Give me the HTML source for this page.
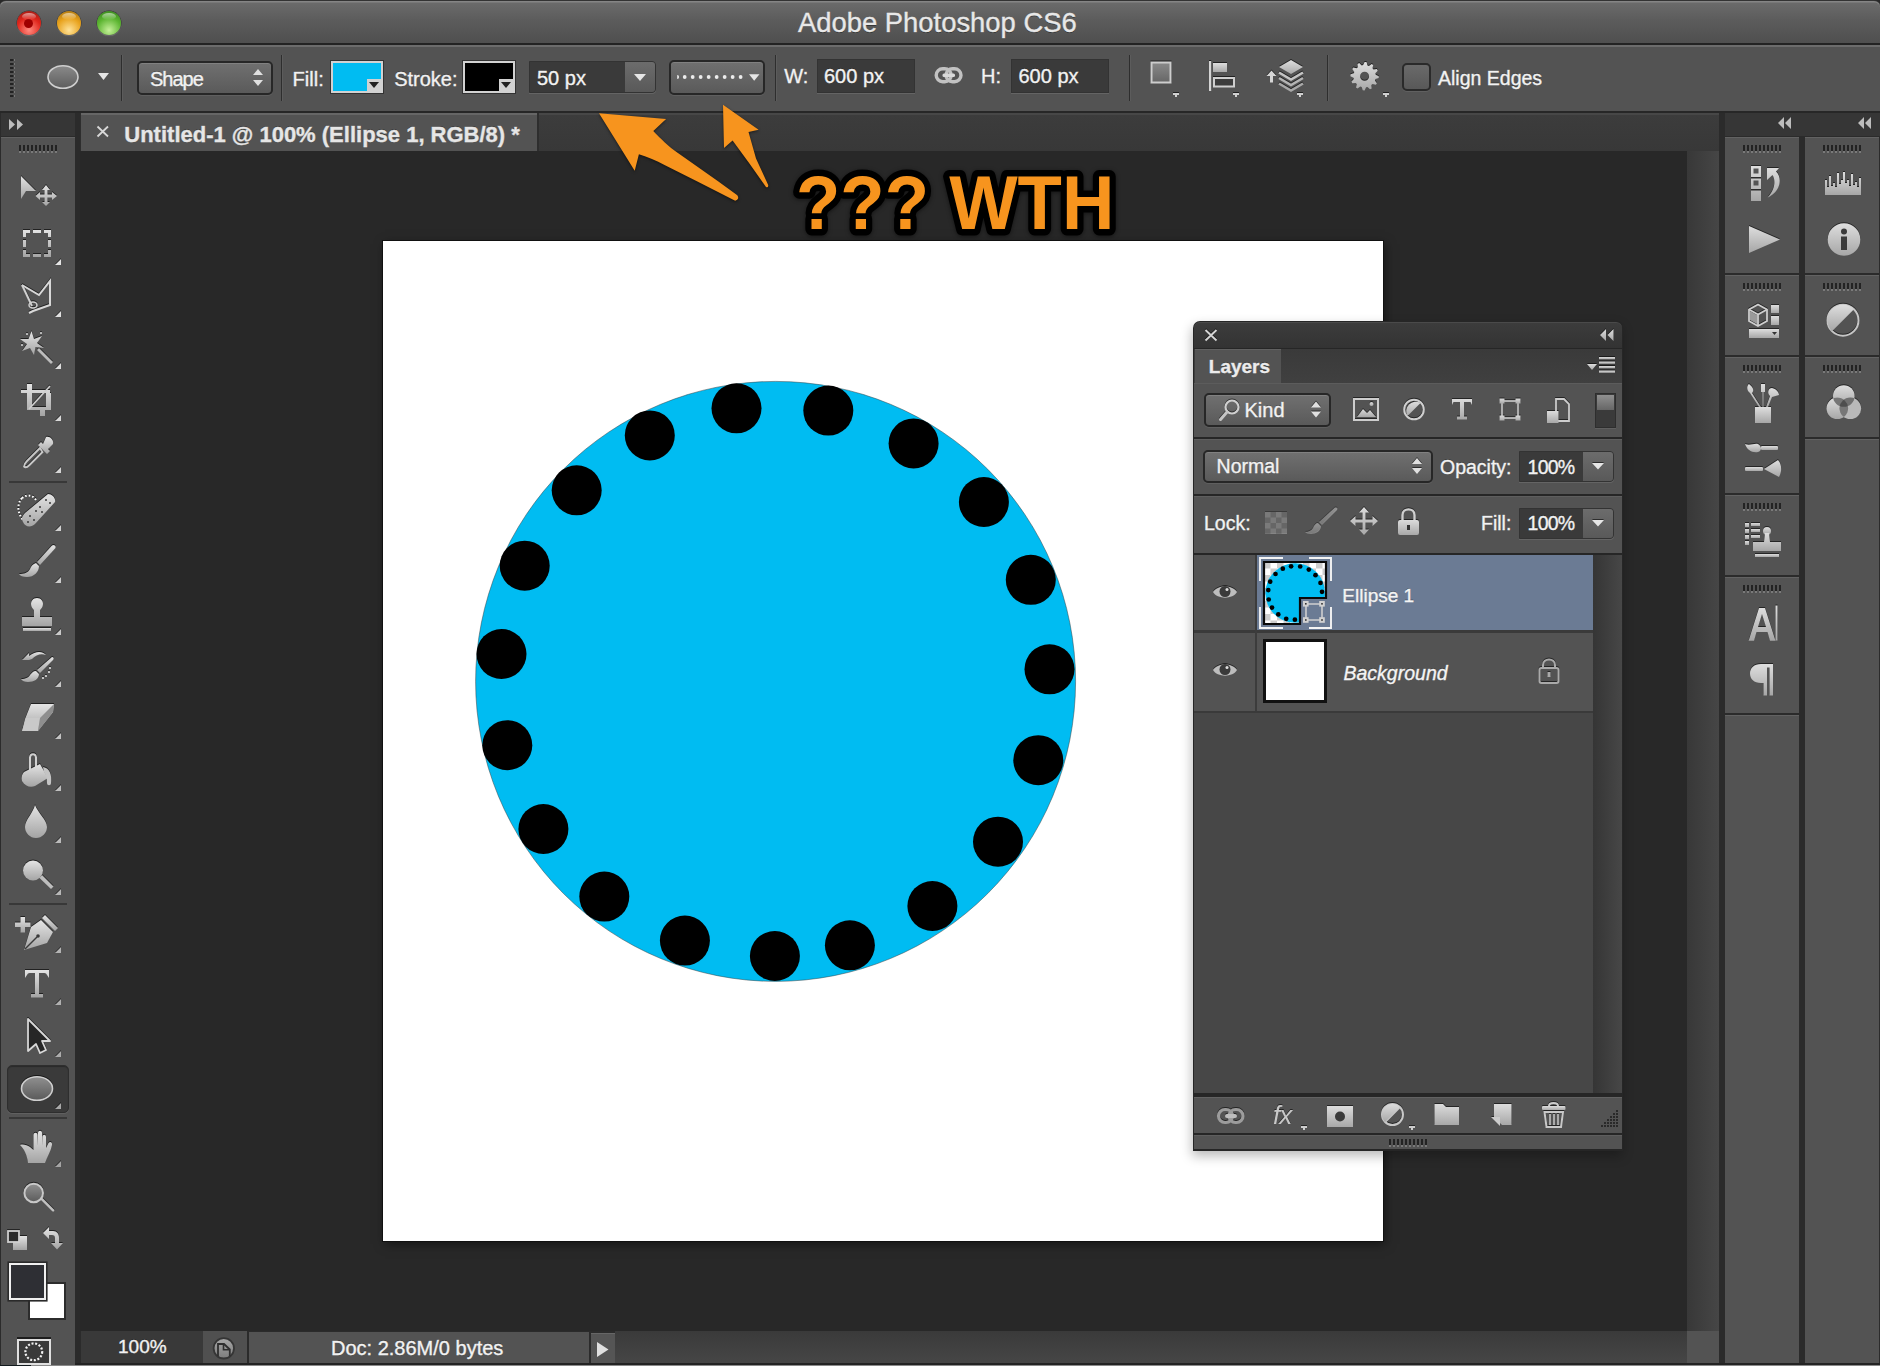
<!DOCTYPE html>
<html><head><meta charset="utf-8">
<style>
*{margin:0;padding:0;box-sizing:border-box}
html,body{width:1880px;height:1366px;overflow:hidden;background:#282828;font-family:"Liberation Sans",sans-serif;color:#eee}
.a{position:absolute}
.t{position:absolute;white-space:nowrap;color:#f2f2f2;text-shadow:0 -1px 0 rgba(0,0,0,.35);-webkit-text-stroke:0.35px currentColor}
svg{position:absolute;overflow:visible}
.dd{border:2px solid #272727;border-radius:5px;background:linear-gradient(#707070,#5a5a5a);box-shadow:inset 0 1px 0 rgba(255,255,255,.12),0 1px 0 rgba(255,255,255,.07)}
.fld{background:#3a3a3a;border:1px solid #333;box-shadow:0 1px 0 rgba(255,255,255,.1)}
.btn{background:linear-gradient(#6c6c6c,#595959);border-radius:0 3px 3px 0}
.sw{border:2px solid #d2d2d2;box-shadow:0 0 0 1px #333}
.sw i{position:absolute;right:0;bottom:0;width:14px;height:12px;background:#d2d2d2}
.sw i:after{content:"";position:absolute;left:2px;top:3px;border-left:5px solid transparent;border-right:5px solid transparent;border-top:6px solid #222}

.grp{background:#535353;border-top:1px solid #626262}
.grp .grip{position:absolute;left:18px;top:7px;width:40px;height:8px}
.grip,.grip2{background:repeating-linear-gradient(90deg,#232323 0 2px,transparent 2px 4px) 0 0/40px 6px no-repeat,repeating-linear-gradient(90deg,#7a7a7a 0 2px,transparent 2px 4px) 0 6px/40px 2px no-repeat}

</style></head><body>

<!-- TITLE BAR -->
<div class="a" style="left:0;top:0;width:1880px;height:45px;background:linear-gradient(#6c6c6c,#5c5c5c 45%,#4f4f4f);border-top:1px solid #333;border-bottom:2px solid #232323;border-radius:6px 6px 0 0;box-shadow:inset 0 1.5px 0 #858585"></div>
<div class="t" style="left:798px;top:7.3px;font-size:27.4px;color:#e8e8e8;text-shadow:0 1px 0 rgba(0,0,0,.4)">Adobe Photoshop CS6</div>

<!-- TRAFFIC -->
<div class="a" style="left:16.8px;top:11px;width:24px;height:24px;border-radius:50%;background:radial-gradient(circle at 50% 80%,#ff8b80 0,#e0251b 55%,#8f1a12 100%);box-shadow:0 1px 1px rgba(255,255,255,.25),0 0 0 0.5px rgba(0,0,0,.5)"></div>
<div class="a" style="left:56.8px;top:11px;width:24px;height:24px;border-radius:50%;background:radial-gradient(circle at 50% 80%,#ffe39a 0,#e8a21c 55%,#9a6a10 100%);box-shadow:0 1px 1px rgba(255,255,255,.25),0 0 0 0.5px rgba(0,0,0,.5)"></div>
<div class="a" style="left:97px;top:11px;width:24px;height:24px;border-radius:50%;background:radial-gradient(circle at 50% 80%,#c6f09a 0,#5cb531 55%,#2f7a1a 100%);box-shadow:0 1px 1px rgba(255,255,255,.25),0 0 0 0.5px rgba(0,0,0,.5)"></div>
<div class="a" style="left:24px;top:18.5px;width:9px;height:9px;border-radius:50%;background:#9e0000"></div>
<div class="a" style="left:21.8px;top:12.5px;width:14px;height:7px;border-radius:50%;background:linear-gradient(rgba(255,255,255,.55),rgba(255,255,255,0))"></div>
<div class="a" style="left:61.8px;top:12.5px;width:14px;height:7px;border-radius:50%;background:linear-gradient(rgba(255,255,255,.55),rgba(255,255,255,0))"></div>
<div class="a" style="left:102px;top:12.5px;width:14px;height:7px;border-radius:50%;background:linear-gradient(rgba(255,255,255,.55),rgba(255,255,255,0))"></div>
<!-- OPTIONS BAR -->
<div class="a" style="left:0;top:45px;width:1880px;height:68px;background:#535353;border-top:2px solid #6c6c6c;border-bottom:2px solid #272727"></div>

<!-- OPTIONS CONTENT -->
<div class="a" style="left:10px;top:59px;width:5px;height:40px;background:repeating-linear-gradient(180deg,#232323 0 2px,transparent 2px 4px) 0 0/3.5px 40px no-repeat,repeating-linear-gradient(180deg,#777 0 2px,transparent 2px 4px) 3.5px 0/1.5px 40px no-repeat"></div>
<div class="a" style="left:121px;top:55px;width:1px;height:46px;background:#2e2e2e;box-shadow:1px 0 0 #5c5c5c"></div>
<div class="a" style="left:281px;top:55px;width:1px;height:46px;background:#2e2e2e;box-shadow:1px 0 0 #5c5c5c"></div>
<div class="a" style="left:775px;top:55px;width:1px;height:46px;background:#2e2e2e;box-shadow:1px 0 0 #5c5c5c"></div>
<div class="a" style="left:1129px;top:55px;width:1px;height:46px;background:#2e2e2e;box-shadow:1px 0 0 #5c5c5c"></div>
<div class="a" style="left:1327px;top:55px;width:1px;height:46px;background:#2e2e2e;box-shadow:1px 0 0 #5c5c5c"></div>
<div class="a dd" style="left:137px;top:61px;width:136px;height:34px"></div>
<div class="t" style="left:150.0px;top:68.6px;font-size:20px;line-height:20px;letter-spacing:-1px">Shape</div>
<svg class="a" style="left:250px;top:68px" width="16" height="20"><path d="M8,1 L13,7 L3,7 Z M3,12 L13,12 L8,18 Z" fill="#e0e0e0"/></svg>
<div class="t" style="left:292.6px;top:68.6px;font-size:20px;line-height:20px;">Fill:</div>
<div class="t" style="left:394.2px;top:68.6px;font-size:20px;line-height:20px;">Stroke:</div>
<div class="a sw" style="left:331px;top:61px;width:52px;height:32px;background:#00bcf2"><i></i></div>
<div class="a sw" style="left:463px;top:61px;width:52px;height:32px;background:#000"><i></i></div>
<div class="a fld" style="left:529px;top:61px;width:127px;height:32px;border-radius:0 4px 4px 0"></div>
<div class="a btn" style="left:625px;top:62px;width:30px;height:30px"></div>
<svg class="a" style="left:632px;top:72px" width="16" height="10"><path d="M2,2 L14,2 L8,9 Z" fill="#e6e6e6"/></svg>
<div class="t" style="left:537.0px;top:68.1px;font-size:20px;line-height:20px;">50 px</div>
<div class="a dd" style="left:669px;top:60px;width:96px;height:35px"></div>
<svg class="a" style="left:670px;top:70px" width="95" height="16"><circle cx="7.2" cy="7" r="1.9" fill="#ececec" clip-path="inset(0 0 0 50%)"/><circle cx="14.70" cy="7" r="1.9" fill="#ececec"/><circle cx="22.69" cy="7" r="1.9" fill="#ececec"/><circle cx="30.68" cy="7" r="1.9" fill="#ececec"/><circle cx="38.67" cy="7" r="1.9" fill="#ececec"/><circle cx="46.66" cy="7" r="1.9" fill="#ececec"/><circle cx="54.65" cy="7" r="1.9" fill="#ececec"/><circle cx="62.64" cy="7" r="1.9" fill="#ececec"/><circle cx="70.63" cy="7" r="1.9" fill="#ececec"/><path d="M79,4.3 L89.5,4.3 L84.2,10.7 Z" fill="#e6e6e6"/></svg>
<div class="t" style="left:784.3px;top:66.3px;font-size:20px;line-height:20px;">W:</div>
<div class="a fld" style="left:817px;top:59px;width:98px;height:34px"></div>
<div class="t" style="left:824.0px;top:65.9px;font-size:20px;line-height:20px;">600 px</div>
<div class="t" style="left:981.0px;top:66.3px;font-size:20px;line-height:20px;">H:</div>
<div class="a fld" style="left:1011px;top:59px;width:98px;height:34px"></div>
<div class="t" style="left:1018.5px;top:65.9px;font-size:20px;line-height:20px;">600 px</div>
<svg class="a" style="left:934px;top:66px" width="30" height="20"><g fill="none" stroke="#c2c2c2" stroke-width="3.4"><rect x="2.2" y="2.7" width="15" height="13" rx="6.5"/><rect x="12" y="2.7" width="15" height="13" rx="6.5"/></g><rect x="8.5" y="7.6" width="12.5" height="3.4" rx="1.5" fill="#d8d8d8"/></svg>
<div class="a" style="left:1402px;top:63px;width:29px;height:28px;border-radius:5px;border:2px solid #2a2a2a;background:linear-gradient(#6a6a6a,#585858);box-shadow:0 1px 0 rgba(255,255,255,.08)"></div>
<div class="t" style="left:1438.0px;top:68.5px;font-size:19.5px;line-height:19.5px;">Align Edges</div>
<svg class="a" style="left:44px;top:62px" width="40" height="30"><defs><linearGradient id="eg" x1="0" y1="0" x2="0" y2="1"><stop offset="0" stop-color="#8a8a8a"/><stop offset="1" stop-color="#5e5e5e"/></linearGradient></defs><ellipse cx="19" cy="15" rx="15" ry="11.3" fill="url(#eg)" stroke="#cfcfcf" stroke-width="1.6"/></svg>
<svg class="a" style="left:97px;top:72px" width="14" height="10"><path d="M1,1 L12,1 L6.5,8 Z" fill="#e6e6e6"/></svg>
<svg class="a" style="left:0;top:0;filter:drop-shadow(0 -1px 0 rgba(0,0,0,.6))" width="1880" height="120">
<defs><linearGradient id="og" x1="0" y1="0" x2="0" y2="1"><stop offset="0" stop-color="#dedede"/><stop offset="1" stop-color="#a8a8a8"/></linearGradient>
<linearGradient id="sq" x1="0" y1="0" x2="0" y2="1"><stop offset="0" stop-color="#8a8a8a"/><stop offset="1" stop-color="#666"/></linearGradient></defs>
<rect x="1151.5" y="62.5" width="19" height="20" fill="url(#sq)" stroke="#cdcdcd" stroke-width="2"/>
<path d="M1173,94 L1179,94 M1176,94 L1176,97" stroke="#d0d0d0" stroke-width="2"/>
<rect x="1209" y="61" width="2.2" height="30" fill="#d4d4d4"/>
<rect x="1213" y="63" width="14" height="9" fill="url(#og)"/>
<rect x="1214" y="78" width="20" height="8.5" fill="#3c3c3c" stroke="#cfcfcf" stroke-width="2"/>
<path d="M1233,94 L1239,94 M1236,94 L1236,97" stroke="#d0d0d0" stroke-width="2"/>
<path d="M1291,60 L1303,67 L1291,74 L1279,67 Z" fill="url(#og)"/>
<path d="M1279,72.5 L1291,79.5 L1303,72.5" fill="none" stroke="#c4c4c4" stroke-width="2.6"/>
<path d="M1279,78 L1291,85 L1303,78" fill="none" stroke="#b4b4b4" stroke-width="2.6"/>
<path d="M1279,83.5 L1291,90.5 L1303,83.5" fill="none" stroke="#a8a8a8" stroke-width="2.6"/>
<path d="M1271.5,70.5 L1276.5,76 L1273,76 L1273,82.5 L1270,82.5 L1270,76 L1266.5,76 Z" fill="#d6d6d6"/>
<path d="M1297,94 L1303,94 M1300,94 L1300,97" stroke="#d0d0d0" stroke-width="2"/>
<path d="M1383,94 L1389,94 M1386,94 L1386,97" stroke="#d0d0d0" stroke-width="2"/>
</svg>
<svg class="a" style="left:0;top:0;filter:drop-shadow(0 -1px 0 rgba(0,0,0,.6))" width="1880" height="120"><path fill="url(#og)" fill-rule="evenodd" d="M1378.8,76.2 L1378.7,78.1 L1375.4,79.1 L1374.9,80.5 L1376.9,83.3 L1375.9,84.8 L1372.5,84.1 L1371.4,85.1 L1371.7,88.5 L1370.0,89.3 L1367.5,87.0 L1366.1,87.3 L1364.6,90.4 L1362.7,90.3 L1361.7,87.0 L1360.3,86.5 L1357.5,88.5 L1356.0,87.5 L1356.7,84.1 L1355.7,83.0 L1352.3,83.3 L1351.5,81.6 L1353.8,79.1 L1353.5,77.7 L1350.4,76.2 L1350.5,74.3 L1353.8,73.3 L1354.3,71.9 L1352.3,69.1 L1353.3,67.6 L1356.7,68.3 L1357.8,67.3 L1357.5,63.9 L1359.2,63.1 L1361.7,65.4 L1363.1,65.1 L1364.6,62.0 L1366.5,62.1 L1367.5,65.4 L1368.9,65.9 L1371.7,63.9 L1373.2,64.9 L1372.5,68.3 L1373.5,69.4 L1376.9,69.1 L1377.7,70.8 L1375.4,73.3 L1375.7,74.7 Z M1369.1,76.2 A4.5,4.5 0 1 0 1360.1,76.2 A4.5,4.5 0 1 0 1369.1,76.2 Z"/></svg>
<!-- LEFT TOOLBAR -->
<div class="a" style="left:0;top:113px;width:80px;height:1253px;background:#2b2b2b"></div>
<div class="a" style="left:1px;top:113px;width:74px;height:23px;background:#363636"></div>
<div class="a" style="left:1px;top:137px;width:74px;height:1229px;background:#535353;border-top:1px solid #626262"></div>

<!-- TOOLBAR ICONS -->
<div class="a grip2" style="left:19px;top:145px;width:40px;height:8px"></div>
<div class="a" style="left:9px;top:481px;width:58px;height:2px;background:#383838"></div>
<div class="a" style="left:9px;top:903px;width:58px;height:2px;background:#383838"></div>
<div class="a" style="left:9px;top:1117px;width:58px;height:2px;background:#383838"></div>
<div class="a" style="left:7px;top:1065px;width:62px;height:48px;border-radius:5px;background:#3a3a3a;border:1px solid #2e2e2e;box-shadow:inset 0 1px 1px rgba(0,0,0,.3),0 1px 0 rgba(255,255,255,.08)"></div>
<svg class="a" style="left:0;top:0;filter:drop-shadow(0 -1px 0 rgba(0,0,0,.6))" width="80" height="1366" viewBox="0 0 80 1366">
<defs>
<linearGradient id="tg" x1="0" y1="0" x2="0" y2="1"><stop offset="0" stop-color="#e4e4e4"/><stop offset="1" stop-color="#a4a4a4"/></linearGradient>
<linearGradient id="tg2" x1="0" y1="0" x2="0" y2="1"><stop offset="0" stop-color="#909090"/><stop offset="1" stop-color="#5a5a5a"/></linearGradient>
</defs>
<g fill="url(#tg)">
<!-- corner triangles -->
<path d="M61,259 L61,265 L55,265 Z M61,311 L61,317 L55,317 Z M61,363 L61,369 L55,369 Z M61,415 L61,421 L55,421 Z M61,467 L61,473 L55,473 Z M61,525 L61,531 L55,531 Z M61,577 L61,583 L55,583 Z M61,629 L61,635 L55,635 Z M61,681 L61,687 L55,687 Z M61,733 L61,739 L55,739 Z M61,785 L61,791 L55,791 Z M61,837 L61,843 L55,843 Z M61,889 L61,895 L55,895 Z M61,947 L61,953 L55,953 Z M61,999 L61,1005 L55,1005 Z M61,1051 L61,1057 L55,1057 Z M61,1103 L61,1109 L55,1109 Z M61,1161 L61,1167 L55,1167 Z"/>
<!-- move -->
<path d="M21,176 L36,191 L26,191 L21,199 Z"/>
<path d="M46,185 L50,190 L47.5,190 L47.5,194.5 L52,194.5 L52,192 L57,196 L52,200 L52,197.5 L47.5,197.5 L47.5,202 L50,202 L46,206 L42,202 L44.5,202 L44.5,197.5 L40,197.5 L40,200 L35.5,196 L40,192 L40,194.5 L44.5,194.5 L44.5,190 L42,190 Z"/>
<!-- marquee -->
<path d="M23,230 h7 v3 h-4 v4 h-3 Z M33,230 h8 v3 h-8 Z M44,230 h7 v7 h-3 v-4 h-4 Z M23,240 h3 v7 h-3 Z M48,240 h3 v7 h-3 Z M23,250 h3 v4 h4 v3 h-7 Z M33,254 h8 v3 h-8 Z M48,250 h3 v7 h-7 v-3 h4 Z"/>
<!-- lasso -->
<path d="M22,285 L39,295 L50,281 L50,305 L33,311 L29,313" fill="none" stroke="#d8d8d8" stroke-width="2"/>
<path d="M22,285 L32,306" fill="none" stroke="#d0d0d0" stroke-width="2"/>
<ellipse cx="33" cy="305" rx="4" ry="3" fill="none" stroke="#ccc" stroke-width="1.6"/>
<!-- wand -->
<path d="M31.5,331 L34,339 L42,336 L37,343 L44,348 L35.5,347 L34,355 L30,348 L22,351 L27,344 L20,339 L28.5,339 Z"/>
<path d="M37,350 L51,364 L53,362 L39,348 Z" fill="#bcbcbc"/>
<circle cx="27" cy="334" r="1" fill="#ddd"/><circle cx="41" cy="333" r="1" fill="#ddd"/><circle cx="22" cy="345" r="1" fill="#ddd"/>
<!-- crop -->
<path d="M27,384 h5 v6 h18 v3 h-18 v14 h14 v-14 h5 v17 h-6 v6 h-5 v-6 h-13 v-17 h-6 v-3 h6 Z"/>
<path d="M29,409 L50,386" stroke="#cfcfcf" stroke-width="1.6"/>
<!-- eyedropper -->
<path d="M46,437 C50,436 54,440 53,444 L48,449 L50,451 L47,454 L38,445 L41,442 L43,444 Z"/>
<path d="M40,448 L27,461 C25,463 24,465 24,466.5 C25.5,468 27.5,467 29.5,465 L42.5,452 Z" fill="none" stroke="#c8c8c8" stroke-width="1.8"/>
<!-- healing -->
<path d="M22,498 C17,504 17,512 23,520" fill="none" stroke="#fff" stroke-width="2" stroke-dasharray="1.6 2"/>
<path d="M22,498 C27,494 33,495 36,500" fill="none" stroke="#fff" stroke-width="2" stroke-dasharray="1.6 2"/>
<path d="M48,494 C52,494 56,498 55,502 L35,524 C31,528 25,527 23,522 C21,519 22,516 25,513 Z"/>
<g fill="#3a3a3a"><circle cx="46" cy="500" r="1"/><circle cx="50" cy="503" r="1"/><circle cx="40" cy="507" r="1"/><circle cx="36" cy="511" r="1"/><circle cx="42" cy="512" r="1"/><circle cx="30" cy="516" r="1"/><circle cx="34" cy="520" r="1"/><circle cx="28" cy="522" r="1"/></g>
<!-- brush -->
<path d="M53,545 C55,545 56,546 55.5,548 L40,565 L37,562 L51.5,546 Z"/>
<path d="M36,563 L39,566 C39,572 34,577 27,577 C23,577 20,576 19,574 C24,574 28,573 30,569 C31,566 33,564 36,563 Z"/>
<!-- stamp -->
<path d="M37,598 C41,598 43,601 43,604 C43,607 41,609 40,610 L40,617 L52,617 L52,626 L22,626 L22,617 L34,617 L34,610 C33,609 31,607 31,604 C31,601 33,598 37,598 Z"/>
<rect x="23" y="628" width="28" height="3"/>
<!-- history brush -->
<path d="M22,660 L29,653 L29,656 C36,651 42,651 46,655 C41,653 36,655 32,659 L29,660 Z"/>
<path d="M52,657 C54,657 54,659 53,660 L40,673 L37,670 Z"/>
<path d="M36,671 L39,674 C39,679 34,682 28,682 C25,682 22,681 21,679 C26,679 29,677 30,675 C32,673 33,671 36,671 Z"/>
<g fill="#fff"><circle cx="50" cy="668" r="0.9"/><circle cx="49" cy="672" r="0.9"/><circle cx="46" cy="676" r="0.9"/><circle cx="43" cy="678" r="0.9"/></g>
<!-- eraser -->
<path d="M31,704 L54,704 L53,712 L38,731 L22,731 L25,719 Z"/>
<path d="M26,718 L40,718 L38,731 L22,731 Z" fill="#c9c9c9"/>
<path d="M40,718 L54,704 L53,712 L38,731 Z" fill="#8e8e8e"/>
<!-- bucket -->
<path d="M30,757 L30,772 M36,757 L36,772" stroke="#d0d0d0" stroke-width="2" fill="none"/>
<path d="M30,758 C30,753 36,753 36,758" stroke="#d0d0d0" stroke-width="2" fill="none"/>
<path d="M24,772 L40,764 L48,778 L35,786 C30,788 25,786 22,781 C21,777 22,774 24,772 Z"/>
<path d="M43,767 C50,768 52,775 51,783 C51,786 47,786 47,783 C47,778 46,775 44,772 Z" fill="#c4c4c4"/>
<!-- blur -->
<path d="M35,805 C38,813 47,820 47,827 C47,833 42,838 36,838 C30,838 25,833 25,827 C25,820 33,813 35,805 Z"/>
<!-- dodge -->
<circle cx="33" cy="870.5" r="10"/>
<path d="M39.5,878 L51,889 L53.5,886.5 L42,875 Z" fill="#bdbdbd"/>
<!-- pen -->
<path d="M20.5,917 h4.5 v5.5 h5.5 v4.5 h-5.5 v5.5 h-4.5 v-5.5 h-5.5 v-4.5 h5.5 Z"/>
<path d="M45,915 L58,928 L55,931 L42,918 Z"/>
<path d="M41,920 L53,932 L47,943 L24,950 L31,927 Z"/>
<path d="M25,949 L37,937" stroke="#3a3a3a" stroke-width="1.5"/>
<circle cx="38" cy="936" r="1.8" fill="#3a3a3a"/>
<!-- type -->
<path d="M25,970 L49,970 L49,978 L47,975 C46,973 45,973 43,973 L39,973 L39,994 L43,994 L43,997.5 L31,997.5 L31,994 L35,994 L35,973 L31,973 C29,973 28,973 27,975 L25,978 Z"/>
<!-- path select -->
<path d="M28,1019 L50,1041 L42,1041 L46,1050 L40,1053 L36,1044 L28,1051 Z" fill="#262626" stroke="#d8d8d8" stroke-width="1.8" stroke-linejoin="round"/>
<!-- ellipse active -->
<ellipse cx="37" cy="1088.5" rx="15.5" ry="11.8" fill="url(#tg2)" stroke="#cfcfcf" stroke-width="1.6"/>
<!-- hand -->
<path d="M28,1163 L45,1163 C47,1157 51,1151 52,1145 C52.5,1142 50,1141 48.5,1143 L46,1148 L46,1137 C46,1134 42.5,1134 42.5,1137 L42.5,1146 L42,1133 C42,1130 38,1130 38,1133 L38,1146 L37.5,1135 C37.5,1132 33.5,1132 33.5,1135 L33.5,1150 L30,1147 C27,1145 23,1144 20,1145 C24,1149 27,1154 28,1163 Z"/>
<!-- zoom -->
<path d="M40,1199 L52,1211 C53.5,1212.5 55,1211 54,1209.5 L42,1197.5 Z" fill="#c0c0c0"/>
<circle cx="33.7" cy="1193" r="9.3" fill="url(#tg2)" stroke="#c8c8c8" stroke-width="2"/>
<!-- default colors -->
<rect x="13" y="1236" width="14" height="14"/>
<rect x="8" y="1231" width="11" height="11" fill="#2c2c2c" stroke="#d0d0d0" stroke-width="1.8"/>
<!-- swap -->
<path d="M43,1233 L49,1227 L49,1231 L53,1231 C57,1231 59,1234 59,1238 L59,1243 L63,1243 L57,1249.5 L51,1243 L55,1243 L55,1238 C55,1236 54,1235 52,1235 L49,1235 L49,1239 Z"/>
</g>
</svg>
<!-- fg/bg swatches -->
<div class="a" style="left:28px;top:1282px;width:38px;height:38px;background:#fff;border:2px solid #2c2c2c"></div>
<div class="a" style="left:9px;top:1262.5px;width:36.5px;height:37px;background:#2e2f34;border:2.6px solid #f0f0f0;box-shadow:0 0 0 1.6px #2a2a2a"></div>
<div class="a" style="left:17px;top:1339px;width:34px;height:25.6px;background:#3a3a3a;border:2px solid #e0e0e0;box-shadow:0 -2px 0 #1e1e1e"></div>
<svg class="a" style="left:0;top:0" width="80" height="1366" viewBox="0 0 80 1366"><circle cx="33.8" cy="1351.8" r="8.4" fill="none" stroke="#f2f2f2" stroke-width="2.2" stroke-dasharray="2 1.7"/></svg>
<!-- TAB BAR -->
<div class="a" style="left:80px;top:113px;width:1639px;height:38px;background:#2e2e2e"></div>
<div class="a" style="left:539px;top:113px;width:1180px;height:38px;background:linear-gradient(#3c3c3c,#383838);border-top:2px solid #474747"></div>
<div class="a" style="left:81px;top:113px;width:456px;height:38px;background:#535353;border-top:2px solid #666"></div>

<!-- TAB CONTENT -->
<svg class="a" style="left:96px;top:125px" width="14" height="13"><path d="M1.5,1.5 L12,11.5 M12,1.5 L1.5,11.5" stroke="#d8d8d8" stroke-width="1.8"/></svg>
<div class="t" style="left:124.3px;top:123.7px;font-size:22px;line-height:22px;font-weight:bold;color:#e6e6e6">Untitled-1 @ 100% (Ellipse 1, RGB/8) *</div>
<svg class="a" style="left:8px;top:118px" width="20" height="14"><path d="M1,1 L7,6.5 L1,12 Z M9,1 L15,6.5 L9,12 Z" fill="#bdbdbd"/></svg>
<!-- CANVAS AREA -->
<div class="a" style="left:80px;top:151px;width:1607px;height:1180px;background:#282828"></div>
<div class="a" style="left:1687px;top:151px;width:32px;height:1180px;background:linear-gradient(90deg,#383838,#464646)"></div>

<!-- STATUS BAR -->
<div class="a" style="left:80px;top:1331px;width:1639px;height:32px;background:#2b2b2b"></div>
<div class="a" style="left:81px;top:1331px;width:122px;height:32px;background:#393939"></div>
<div class="a" style="left:203px;top:1331px;width:44px;height:32px;background:#505050"></div>
<div class="a" style="left:249px;top:1332px;width:340px;height:31px;background:#535353"></div>
<div class="a" style="left:591px;top:1333px;width:24px;height:30px;background:#555;border-top:1px solid #666"></div>
<div class="a" style="left:615px;top:1331px;width:1072px;height:32px;background:linear-gradient(#3a3a3a,#464646)"></div>
<div class="a" style="left:1687px;top:1331px;width:32px;height:32px;background:#535353"></div>
<div class="a" style="left:75px;top:1363px;width:1805px;height:1.7px;background:#232323"></div>
<div class="a" style="left:0;top:1364.7px;width:1880px;height:2px;background:#8a8a8a"></div>
<div class="a" style="left:0;top:1364.7px;width:31px;height:2px;background:#121a1e"></div>

<!-- STATUS CONTENT -->
<div class="t" style="left:118.0px;top:1336.9px;font-size:19px;line-height:19px;color:#f2f2f2">100%</div>
<div class="t" style="left:331.0px;top:1337.6px;font-size:20px;line-height:20px;color:#f2f2f2">Doc: 2.86M/0 bytes</div>
<svg class="a" style="left:0;top:0" width="1880" height="1366" viewBox="0 0 1880 1366"><defs><linearGradient id="sg" x1="0" y1="0" x2="0" y2="1"><stop offset="0" stop-color="#a8a8a8"/><stop offset="1" stop-color="#7c7c7c"/></linearGradient></defs><circle cx="223.8" cy="1348.3" r="10.2" fill="url(#sg)" stroke="#353535" stroke-width="1.8"/><path d="M218,1356 L218,1344 L224,1344 L229.8,1349.5 L229.8,1356" fill="none" stroke="#2e2e2e" stroke-width="1.8"/><path d="M223.5,1344 L223.5,1349.8 L229.5,1349.8" fill="none" stroke="#2e2e2e" stroke-width="1.6"/></svg>
<svg class="a" style="left:596px;top:1341px" width="14" height="17"><path d="M1,1 L12.5,8.5 L1,16 Z" fill="#e0e0e0"/></svg>
<!-- RIGHT DOCK -->
<div class="a" style="left:1719px;top:113px;width:161px;height:1250px;background:#2b2b2b"></div>
<div class="a" style="left:1725px;top:113px;width:155px;height:23px;background:#363636"></div>

<!-- DOCK COLUMNS -->
<div class="a grp" style="left:1725px;top:137px;width:74px;height:136px"><div class="grip"></div></div>
<div class="a grp" style="left:1725px;top:275px;width:74px;height:80px"><div class="grip"></div></div>
<div class="a grp" style="left:1725px;top:357px;width:74px;height:136px"><div class="grip"></div></div>
<div class="a grp" style="left:1725px;top:495px;width:74px;height:80px"><div class="grip"></div></div>
<div class="a grp" style="left:1725px;top:577px;width:74px;height:136px"><div class="grip"></div></div>
<div class="a grp" style="left:1725px;top:715px;width:74px;height:648px"></div>
<div class="a grp" style="left:1805px;top:137px;width:74px;height:136px"><div class="grip"></div></div>
<div class="a grp" style="left:1805px;top:275px;width:74px;height:80px"><div class="grip"></div></div>
<div class="a grp" style="left:1805px;top:357px;width:74px;height:80px"><div class="grip"></div></div>
<div class="a grp" style="left:1805px;top:439px;width:74px;height:924px"></div>
<svg class="a" style="left:1725px;top:113px" width="155" height="23"><g fill="#bdbdbd"><path d="M53,10 L59,4 L59,16 Z M60,10 L66,4 L66,16 Z"/><path d="M133,10 L139,4 L139,16 Z M140,10 L146,4 L146,16 Z"/></g></svg>
<svg class="a" style="left:0;top:0;filter:drop-shadow(0 -1px 0 rgba(0,0,0,.55))" width="1880" height="1366" viewBox="0 0 1880 1366">
<defs>
<linearGradient id="ig" x1="0" y1="0" x2="0" y2="1"><stop offset="0" stop-color="#dedede"/><stop offset="1" stop-color="#a6a6a6"/></linearGradient>
<linearGradient id="ig2" x1="0" y1="0" x2="1" y2="1"><stop offset="0" stop-color="#e2e2e2"/><stop offset="1" stop-color="#9a9a9a"/></linearGradient>
</defs>
<g fill="url(#ig)">
<!-- history -->
<rect x="1751" y="166" width="10" height="35"/>
<rect x="1753.5" y="168.5" width="5" height="5" fill="#555"/>
<rect x="1753.5" y="180.5" width="5" height="5" fill="#555"/>
<rect x="1751" y="177" width="10" height="1.5" fill="#2a2a2a"/>
<rect x="1751" y="189" width="10" height="1.5" fill="#2a2a2a"/>
<path d="M1767,168 L1779,168 L1776,171.5 C1782,177 1782,191 1767,198 C1775,190 1776,180 1772.5,175 L1767,180 Z"/>
<!-- play -->
<path d="M1749,226 L1780,239.5 L1749,253 Z"/>
<!-- histogram -->
<path d="M1825,195 L1825,180 L1827,180 L1827,187 L1829,187 L1829,176 L1831,176 L1831,186 L1833,186 L1833,183 L1835,183 L1835,187 L1837,187 L1837,173 L1839,173 L1839,184 L1841,184 L1841,180 L1843,180 L1843,172 L1845,172 L1845,183 L1847,183 L1847,180 L1849,180 L1849,186 L1851,186 L1851,174 L1853,174 L1853,185 L1855,185 L1855,182 L1857,182 L1857,187 L1859,187 L1859,178 L1861,178 L1861,195 Z"/>
<!-- info -->
<circle cx="1844" cy="239.5" r="16.3"/>
<circle cx="1844" cy="231.5" r="3" fill="#3a3a3a"/>
<rect x="1841" y="236.5" width="6" height="13.5" fill="#3a3a3a"/>
<!-- 3d -->
<path d="M1758,304.5 L1767,309.5 L1767,321 L1758,326 L1749,321 L1749,309.5 Z" fill="none" stroke="#cfcfcf" stroke-width="1.8"/>
<path d="M1749,309.5 L1758,314.5 L1767,309.5 M1758,314.5 L1758,326" fill="none" stroke="#cfcfcf" stroke-width="1.8"/>
<path d="M1750,311 L1757,315 L1757,324 L1750,320 Z" fill="#9a9a9a"/>
<rect x="1771" y="305" width="8" height="8"/>
<rect x="1771" y="316" width="8" height="9"/>
<rect x="1749" y="329" width="30" height="9"/>
<path d="M1772,332 L1777,332 L1774.5,335 Z" fill="#333"/>
<!-- adjustments -->
<circle cx="1843" cy="320.2" r="15.5" fill="none" stroke="#c6c6c6" stroke-width="2"/>
<path d="M1832,331.2 A15.5,15.5 0 0 1 1854,309.2 Z"/>
<!-- brushes -->
<rect x="1755" y="407" width="16" height="16"/>
<path d="M1759,407 L1750,393 C1746,390 1747,385 1749,384 C1754,388 1754,391 1752,393 L1761,407 Z"/>
<path d="M1762.5,407 L1762.5,392 L1761,392 L1761,384 L1765,384 L1765,392 L1763.5,392 L1763.5,407 Z"/>
<path d="M1766,407 L1770,396 C1767,393 1768,388 1772,388 C1776,389 1779,392 1779,395 L1772,397 L1768,407 Z"/>
<!-- brush presets -->
<path d="M1745,444 C1750,446 1754,443 1758,444 C1762,446 1762,451 1758,452 C1752,453 1747,450 1745,444 Z"/>
<rect x="1761" y="446" width="17" height="4" rx="1"/>
<rect x="1745" y="467" width="18" height="4" rx="1"/>
<path d="M1764,469 L1778,460 C1782,464 1782,472 1779,477 Z"/>
<!-- color circles -->
<clipPath id="cc1"><circle cx="1843.8" cy="396" r="10.8"/></clipPath>
<clipPath id="cc2"><circle cx="1837.3" cy="408.3" r="10.8"/></clipPath>
<circle cx="1843.8" cy="396" r="10.8"/>
<circle cx="1837.3" cy="408.3" r="10.8"/>
<circle cx="1850.3" cy="408.3" r="10.8" fill="#b9b9b9"/>
<circle cx="1837.3" cy="408.3" r="10.8" fill="#757575" clip-path="url(#cc1)"/>
<circle cx="1850.3" cy="408.3" r="10.8" fill="#707070" clip-path="url(#cc1)"/>
<g clip-path="url(#cc2)"><circle cx="1850.3" cy="408.3" r="10.8" fill="#777"/></g>
<g clip-path="url(#cc1)"><g clip-path="url(#cc2)"><circle cx="1850.3" cy="408.3" r="10.8" fill="#4e4e4e"/></g></g>
<!-- clone source -->
<rect x="1745" y="523" width="4" height="4"/><rect x="1751" y="523" width="9" height="3"/>
<rect x="1745" y="529" width="4" height="4"/><rect x="1751" y="529" width="9" height="3"/>
<rect x="1745" y="535" width="4" height="4"/><rect x="1751" y="535" width="9" height="3"/>
<rect x="1745" y="541" width="4" height="4"/>
<circle cx="1767" cy="531" r="4"/>
<path d="M1765,533 L1769,533 L1770,542 L1781,542 L1781,551 L1753,551 L1753,542 L1764,542 Z"/>
<rect x="1755" y="554" width="24" height="3"/>
<!-- character -->
<path d="M1748.6,640.7 L1759,608 L1765,608 L1775.5,640.7 L1770,640.7 L1767.5,632 L1756.5,632 L1754,640.7 Z M1758,627 L1766,627 L1762,614 Z"/>
<rect x="1775.5" y="605.5" width="2" height="35"/>
<!-- paragraph -->
<path d="M1773,664 L1773,695.5 L1769.5,695.5 L1769.5,667.5 L1767,667.5 L1767,695.5 L1763.5,695.5 L1763.5,683 L1761,683 C1754,683 1750,679 1750,673.5 C1750,668 1754,664 1761,664 Z"/>
</g>
</svg>
<!-- DOCUMENT -->
<div class="a" style="left:383px;top:241px;width:1000px;height:1000px;background:#fff;box-shadow:0 0 0 1px #111,2px 3px 10px rgba(0,0,0,.5)"></div>

<!-- CIRCLE -->
<svg class="a" style="left:0;top:0" width="1880" height="1366" viewBox="0 0 1880 1366">
<circle cx="775.6" cy="681.4" r="300" fill="#00bcf2" stroke="rgba(60,60,60,.6)" stroke-width="0.8"/>
<circle cx="736.5" cy="408.3" r="25" fill="#000"/><circle cx="828.3" cy="410.6" r="25" fill="#000"/><circle cx="913.6" cy="443.4" r="25" fill="#000"/><circle cx="983.9" cy="502" r="25" fill="#000"/><circle cx="1030.8" cy="579.8" r="25" fill="#000"/><circle cx="1049.5" cy="669.3" r="25" fill="#000"/><circle cx="1038.3" cy="760.2" r="25" fill="#000"/><circle cx="998" cy="841.7" r="25" fill="#000"/><circle cx="932.4" cy="906" r="25" fill="#000"/><circle cx="849.9" cy="945.3" r="25" fill="#000"/><circle cx="774.9" cy="956" r="25" fill="#000"/><circle cx="684.9" cy="940.6" r="25" fill="#000"/><circle cx="604.3" cy="896.6" r="25" fill="#000"/><circle cx="543.4" cy="829" r="25" fill="#000"/><circle cx="507.3" cy="745.2" r="25" fill="#000"/><circle cx="501.5" cy="654" r="25" fill="#000"/><circle cx="524.7" cy="565.7" r="25" fill="#000"/><circle cx="576.7" cy="490.3" r="25" fill="#000"/><circle cx="649.8" cy="435.4" r="25" fill="#000"/>
</svg>
<!-- LAYERS PANEL -->
<div class="a" style="left:1193px;top:321px;width:430px;height:830px;background:#262626;border-radius:7px 7px 0 0;box-shadow:-1px 5px 12px rgba(0,0,0,.28)"></div>
<div class="a" style="left:1194px;top:322px;width:428px;height:26px;background:linear-gradient(#3c3c3c,#333);border-radius:6px 6px 0 0;border-top:1px solid #4a4a4a"></div>
<div class="a" style="left:1194px;top:349px;width:428px;height:34px;background:linear-gradient(#3a3a3a,#404040)"></div>
<div class="a" style="left:1195px;top:349px;width:86px;height:35px;background:#535353;border-top:1px solid #616161"></div>
<div class="a" style="left:1194px;top:383px;width:428px;height:54px;background:#535353;border-top:1px solid #5c5c5c"></div>
<div class="a" style="left:1194px;top:439px;width:428px;height:55px;background:#535353;border-top:1px solid #5e5e5e"></div>
<div class="a" style="left:1194px;top:496px;width:428px;height:57px;background:#535353;border-top:1px solid #5e5e5e"></div>
<div class="a" style="left:1194px;top:555px;width:428px;height:538px;background:#474747"></div>
<div class="a" style="left:1593px;top:555px;width:29px;height:538px;background:linear-gradient(90deg,#353535,#474747)"></div>
<div class="a" style="left:1194px;top:555px;width:399px;height:75px;background:#535353"></div>
<div class="a" style="left:1257px;top:555px;width:336px;height:75px;background:#6b7b94"></div>
<div class="a" style="left:1194px;top:630px;width:399px;height:3px;background:#3a3a3a"></div>
<div class="a" style="left:1194px;top:633px;width:399px;height:78px;background:#535353"></div>
<div class="a" style="left:1194px;top:711px;width:399px;height:2px;background:#3a3a3a"></div>
<div class="a" style="left:1255px;top:555px;width:2px;height:156px;background:#3c3c3c"></div>
<div class="a" style="left:1194px;top:1097px;width:428px;height:36px;background:#535353;border-top:1px solid #626262"></div>
<div class="a" style="left:1194px;top:1135px;width:428px;height:14px;background:#535353;border-top:1px solid #5e5e5e"></div>
<div class="a grip2" style="left:1389px;top:1139px;width:40px;height:8px"></div>
<div class="t" style="left:1208.8px;top:357.1px;font-size:19px;line-height:19px;font-weight:bold;color:#ececec">Layers</div>
<div class="a dd" style="left:1204px;top:393px;width:127px;height:34px"></div>
<div class="t" style="left:1244.5px;top:400.1px;font-size:20px;line-height:20px;">Kind</div>
<div class="a dd" style="left:1203px;top:450px;width:230px;height:33px"></div>
<div class="t" style="left:1216.6px;top:456.8px;font-size:19.5px;line-height:19.5px;">Normal</div>
<div class="t" style="left:1440.0px;top:457.5px;font-size:19.5px;line-height:19.5px;">Opacity:</div>
<div class="a fld" style="left:1519px;top:451px;width:95px;height:31px;border-radius:0 4px 4px 0"></div>
<div class="a btn" style="left:1583px;top:452px;width:30px;height:29px"></div>
<div class="t" style="left:1527.6px;top:457.5px;font-size:19.5px;line-height:19.5px;letter-spacing:-0.8px">100%</div>
<div class="t" style="left:1204.0px;top:514.1px;font-size:19.5px;line-height:19.5px;">Lock:</div>
<div class="t" style="left:1481.0px;top:514.1px;font-size:19.5px;line-height:19.5px;">Fill:</div>
<div class="a fld" style="left:1519px;top:508px;width:95px;height:31px;border-radius:0 4px 4px 0"></div>
<div class="a btn" style="left:1583px;top:509px;width:30px;height:29px"></div>
<div class="t" style="left:1527.6px;top:514.1px;font-size:19.5px;line-height:19.5px;letter-spacing:-0.8px">100%</div>
<div class="t" style="left:1342.3px;top:586.2px;font-size:19px;line-height:19px;color:#f4f4f4">Ellipse 1</div>
<div class="t" style="left:1343.5px;top:664.2px;font-size:19.5px;line-height:19.5px;font-style:italic;color:#f4f4f4">Background</div>
<div class="a" style="left:1263px;top:639px;width:64px;height:64px;background:#fff;border:3px solid #111"></div>
<svg class="a" style="left:0;top:0" width="1880" height="1366" viewBox="0 0 1880 1366">
<defs>
<pattern id="chk" x="1264" y="562" width="13" height="13" patternUnits="userSpaceOnUse"><rect width="13" height="13" fill="#fff"/><rect width="6.5" height="6.5" fill="#cdcdcd"/><rect x="6.5" y="6.5" width="6.5" height="6.5" fill="#cdcdcd"/></pattern>
<clipPath id="thc"><path d="M1264,562 L1326,562 L1326,598 L1300,598 L1300,624 L1264,624 Z"/></clipPath>
</defs>
<g clip-path="url(#thc)">
<rect x="1264" y="562" width="62" height="62" fill="url(#chk)"/>
<circle cx="1295.2" cy="593" r="29.8" fill="#00bcf2"/>
<circle cx="1291.1" cy="566.3" r="2.35" fill="#000"/><circle cx="1300.2" cy="566.5" r="2.35" fill="#000"/><circle cx="1308.8" cy="569.6" r="2.35" fill="#000"/><circle cx="1315.5" cy="575.2" r="2.35" fill="#000"/><circle cx="1320.5" cy="582.9" r="2.35" fill="#000"/><circle cx="1322" cy="591.8" r="2.35" fill="#000"/><circle cx="1282.8" cy="568.7" r="2.35" fill="#000"/><circle cx="1275.5" cy="574" r="2.35" fill="#000"/><circle cx="1270.2" cy="581.7" r="2.35" fill="#000"/><circle cx="1268.3" cy="590.1" r="2.35" fill="#000"/><circle cx="1268.7" cy="599.5" r="2.35" fill="#000"/><circle cx="1272" cy="607.6" r="2.35" fill="#000"/><circle cx="1278.3" cy="614.4" r="2.35" fill="#000"/><circle cx="1286.2" cy="618.8" r="2.35" fill="#000"/><circle cx="1294.9" cy="619.7" r="2.35" fill="#000"/>
</g>
<path d="M1264,562 L1326,562 L1326,598 L1300,598 L1300,624 L1264,624 Z" fill="none" stroke="#0a0a0a" stroke-width="2.2"/>
<g fill="none" stroke="#f4f4f4" stroke-width="1.9">
<path d="M1260,581 L1260,558 L1283,558 M1309,558 L1331,558 L1331,581 M1331,607 L1331,628 L1309,628 M1283,628 L1260,628 L1260,607"/>
</g>
<g stroke="#cfcfcf" stroke-width="1.6" fill="none"><path d="M1306,604 L1322,604 L1322,620 L1306,620 Z"/></g>
<g fill="#d2d2d2"><rect x="1303" y="601" width="5.6" height="5.6"/><rect x="1319.2" y="601" width="5.6" height="5.6"/><rect x="1303" y="617.2" width="5.6" height="5.6"/><rect x="1319.2" y="617.2" width="5.6" height="5.6"/></g>
<g fill="#333"><rect x="1305" y="603" width="1.6" height="1.6"/><rect x="1321.2" y="603" width="1.6" height="1.6"/><rect x="1305" y="619.2" width="1.6" height="1.6"/><rect x="1321.2" y="619.2" width="1.6" height="1.6"/></g>
</svg>
<!-- PANEL ICONS -->
<svg class="a" style="left:0;top:0;filter:drop-shadow(0 -1px 0 rgba(0,0,0,.55))" width="1880" height="1366" viewBox="0 0 1880 1366">
<defs>
<linearGradient id="pg" x1="0" y1="0" x2="0" y2="1"><stop offset="0" stop-color="#dcdcdc"/><stop offset="1" stop-color="#a8a8a8"/></linearGradient>
</defs>
<g fill="url(#pg)">
<path d="M1205.5,330 L1216.5,340.5 M1216.5,330 L1205.5,340.5" stroke="#d6d6d6" stroke-width="1.8"/>
<path d="M1600,335 L1606,329 L1606,341 Z M1607.5,335 L1613.5,329 L1613.5,341 Z"/>
<path d="M1587,364 L1597,364 L1592,370 Z"/>
<rect x="1599" y="357" width="16" height="2.3"/><rect x="1599" y="361.5" width="16" height="2.3"/><rect x="1599" y="366" width="16" height="2.3"/><rect x="1599" y="370.5" width="16" height="2.3"/>
<!-- search -->
<circle cx="1232" cy="407" r="6.5" fill="none" stroke="#d0d0d0" stroke-width="2.2"/>
<path d="M1227,412 L1220.5,419.5" stroke="#c4c4c4" stroke-width="3" stroke-linecap="round"/>
<path d="M1316,401.5 L1321,407.5 L1311,407.5 Z M1311,411.5 L1321,411.5 L1316,417.5 Z" fill="#e0e0e0"/>
<!-- filter icons -->
<rect x="1354" y="399" width="24" height="21" fill="none" stroke="#cdcdcd" stroke-width="2"/>
<path d="M1357,417 L1363,409 L1367,413 L1370,410 L1376,417 Z"/>
<circle cx="1371.5" cy="404" r="2"/>
<circle cx="1414" cy="409.5" r="9.8" fill="none" stroke="#cfcfcf" stroke-width="2"/>
<path d="M1407.5,416 A9.5,9.5 0 0 1 1420.5,403 Z"/>
<path d="M1452,399 L1472,399 L1472,405 L1470.5,402 L1464,402 L1464,416.5 L1467,416.5 L1467,419.5 L1457,419.5 L1457,416.5 L1460,416.5 L1460,402 L1453.5,402 L1452,405 Z"/>
<rect x="1502" y="401" width="16" height="17" fill="none" stroke="#cdcdcd" stroke-width="1.6"/>
<rect x="1499.5" y="398.5" width="5" height="5"/><rect x="1515.5" y="398.5" width="5" height="5"/><rect x="1499.5" y="415.5" width="5" height="5"/><rect x="1515.5" y="415.5" width="5" height="5"/>
<path d="M1556,399 L1564,399 L1569,404 L1569,421 L1556,421 Z" fill="none" stroke="#cdcdcd" stroke-width="1.8"/>
<rect x="1547" y="411" width="11.5" height="12"/>
<!-- normal arrows -->
<path d="M1417,458 L1422,464 L1412,464 Z M1412,468 L1422,468 L1417,474 Z" fill="#e0e0e0"/>
<path d="M1592,463 L1604,463 L1598,469.5 Z M1592,520 L1604,520 L1598,526.5 Z" fill="#e6e6e6"/>
<!-- lock icons -->
<g opacity=".55">
<rect x="1265" y="512" width="22" height="22" fill="#8a8a8a"/>
<path d="M1265,512 h5.5 v5.5 h-5.5 Z M1276,512 h5.5 v5.5 h-5.5 Z M1270.5,517.5 h5.5 v5.5 h-5.5 Z M1281.5,517.5 h5.5 v5.5 h-5.5 Z M1265,523 h5.5 v5.5 h-5.5 Z M1276,523 h5.5 v5.5 h-5.5 Z M1270.5,528.5 h5.5 v5.5 h-5.5 Z M1281.5,528.5 h5.5 v5.5 h-5.5 Z" fill="#b0b0b0"/>
<path d="M1335,507.5 C1337,507 1338,508.5 1337,510 L1322,525 L1319,522 Z"/>
<path d="M1318,523 L1321,526 C1321,531 1316,534 1311,534 C1308,534 1306,533 1305,532 C1309,532 1312,530 1313,528 C1314,525 1316,523 1318,523 Z"/>
</g>
<path d="M1364,507 L1369,512.5 L1365.5,512.5 L1365.5,519.5 L1372.5,519.5 L1372.5,516 L1378,521 L1372.5,526 L1372.5,522.5 L1365.5,522.5 L1365.5,529.5 L1369,529.5 L1364,535 L1359,529.5 L1362.5,529.5 L1362.5,522.5 L1355.5,522.5 L1355.5,526 L1350,521 L1355.5,516 L1355.5,519.5 L1362.5,519.5 L1362.5,512.5 L1359,512.5 Z"/>
<path d="M1402.5,520 L1402.5,515 C1402.5,507.5 1414.5,507.5 1414.5,515 L1414.5,520" fill="none" stroke="#d0d0d0" stroke-width="2.4"/>
<rect x="1398" y="520" width="21" height="15" rx="2"/>
<rect x="1407" y="525" width="3" height="5" fill="#333"/>
<!-- eyes -->
<path d="M1213,592 C1217,584.5 1233,584.5 1237,592 C1233,599.5 1217,599.5 1213,592 Z" fill="#bdbdbd"/>
<circle cx="1225" cy="591.5" r="5.5" fill="#3a3a3a"/><circle cx="1227" cy="589.5" r="1.5" fill="#ddd"/>
<path d="M1213,670 C1217,662.5 1233,662.5 1237,670 C1233,677.5 1217,677.5 1213,670 Z" fill="#bdbdbd"/>
<circle cx="1225" cy="669.5" r="5.5" fill="#3a3a3a"/><circle cx="1227" cy="667.5" r="1.5" fill="#ddd"/>
<!-- small lock -->
<path d="M1543,668 L1543,665 C1543,657.5 1555,657.5 1555,665 L1555,668" fill="none" stroke="#aaa" stroke-width="2"/>
<rect x="1539.5" y="668" width="19" height="15" rx="2" fill="none" stroke="#aaa" stroke-width="2"/>
<rect x="1547.5" y="672" width="3" height="5" fill="#aaa"/>
<!-- footer -->
<g fill="none" stroke="#9c9c9c" stroke-width="3.2"><rect x="1218.5" y="1109.5" width="14" height="13" rx="6.5"/><rect x="1229" y="1109.5" width="14" height="13" rx="6.5"/></g>
<rect x="1225" y="1114" width="12" height="4" rx="2" fill="#bdbdbd"/>
<text x="1273" y="1124" font-family="Liberation Sans" font-style="italic" font-size="26" fill="#c8c8c8" stroke="none" letter-spacing="-1">fx</text>
<path d="M1301,1127 L1307,1127 M1304,1127 L1304,1130" stroke="#ccc" stroke-width="2"/>
<rect x="1327" y="1106" width="26" height="21"/>
<circle cx="1340" cy="1116.5" r="5" fill="#3a3a3a"/>
<circle cx="1392.5" cy="1114.5" r="10.5" fill="none" stroke="#c8c8c8" stroke-width="2"/>
<path d="M1385,1122 L1400,1107" stroke="#c8c8c8" stroke-width="2"/>
<path d="M1385,1122 A10.5,10.5 0 0 1 1400,1107 Z"/>
<path d="M1409,1127 L1415,1127 M1412,1127 L1412,1130" stroke="#ccc" stroke-width="2"/>
<path d="M1434.5,1104 L1443,1104 L1446,1107 L1459,1107 L1459,1125 L1434.5,1125 Z"/>
<path d="M1494,1104 L1511.5,1104 L1511.5,1125 L1502,1125 L1494,1117 Z"/>
<path d="M1491,1117 L1500,1117 L1500,1126 Z" fill="#ccc"/>
<path d="M1549,1106 C1549,1102 1558,1102 1558,1106" fill="none" stroke="#ccc" stroke-width="2"/>
<rect x="1542" y="1106" width="23.5" height="4" rx="1"/>
<path d="M1544.5,1112 L1563,1112 L1561,1127 L1546.5,1127 Z" fill="none" stroke="#c8c8c8" stroke-width="2"/>
<path d="M1550,1114 L1550,1125 M1554,1114 L1554,1125 M1558,1114 L1558,1125" stroke="#c8c8c8" stroke-width="1.6"/>
</g>
</svg>
<svg class="a" style="left:1600px;top:1108px" width="20" height="22"><g fill="#2a2a2a">
<rect x="16" y="2" width="2" height="2"/><rect x="13" y="5" width="2" height="2"/><rect x="16" y="5" width="2" height="2"/>
<rect x="10" y="8" width="2" height="2"/><rect x="13" y="8" width="2" height="2"/><rect x="16" y="8" width="2" height="2"/>
<rect x="7" y="11" width="2" height="2"/><rect x="10" y="11" width="2" height="2"/><rect x="13" y="11" width="2" height="2"/><rect x="16" y="11" width="2" height="2"/>
<rect x="4" y="14" width="2" height="2"/><rect x="7" y="14" width="2" height="2"/><rect x="10" y="14" width="2" height="2"/><rect x="13" y="14" width="2" height="2"/><rect x="16" y="14" width="2" height="2"/>
<rect x="1" y="17" width="2" height="2"/><rect x="4" y="17" width="2" height="2"/><rect x="7" y="17" width="2" height="2"/><rect x="10" y="17" width="2" height="2"/><rect x="13" y="17" width="2" height="2"/><rect x="16" y="17" width="2" height="2"/>
</g></svg>
<div class="a" style="left:1595px;top:393px;width:21px;height:35px;background:#3a3a3a;border:1px solid #2e2e2e;box-shadow:0 1px 0 rgba(255,255,255,.08)"><div style="position:absolute;left:1px;top:1px;width:17px;height:15px;background:linear-gradient(#909090,#666)"></div></div>
<!-- ANNOTATION -->
<svg class="a" style="left:0;top:0;filter:drop-shadow(0 1px 1.5px rgba(0,0,0,.55))" width="1880" height="300" viewBox="0 0 1880 300">
<path fill="#f7941e" d="M599,113.3 L666.1,119.1 L653.3,130.9 C658,136 664,142 675.1,151.1 L717.7,180.9 L737.3,195.2 Q740,199 735.2,200.8 L696.4,180.9 L664.5,164.9 C656,160.5 648,157 638.9,154.3 L634.7,170.7 Z"/>
<path fill="#f7941e" d="M723,104.8 L758.6,129.8 L748.5,131.9 L756,158.5 L768.2,185.1 Q768.5,188 766,187 L749.6,163.8 L732.6,140.4 L724,147.9 Z"/>
</svg>
<svg class="a" style="left:0;top:0" width="1880" height="300" viewBox="0 0 1880 300">
<text id="wth" x="796" y="229" font-family="Liberation Sans" font-weight="bold" font-size="76" transform="translate(796 229) scale(0.955 1) translate(-796 -229)" fill="#f7941e" stroke="#000" stroke-width="13" stroke-linejoin="round" paint-order="stroke" style="filter:drop-shadow(0 1px 2px rgba(0,0,0,.5))">??? WTH</text>
</svg>
</body></html>
